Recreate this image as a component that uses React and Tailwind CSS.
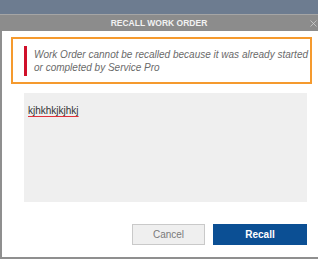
import { X } from "lucide-react";

export default function App() {
  return (
    <div className="w-[318px] h-[261px] bg-white overflow-hidden font-['Liberation_Sans',Arial,sans-serif] flex flex-col">
      {/* Page behind the dialog */}
      <div className="h-[14px] bg-[#6d7c90] shrink-0" />

      {/* Dialog */}
      <div className="flex flex-col h-[245px] border-l-2 border-b-2 border-[#8f8f8f]">
        {/* Header */}
        <div className="h-[17px] bg-[#8c8c8c] border-t border-[#a5a5a5] relative flex items-center justify-center shrink-0 -ml-[2px]">
          <span className="text-[8.5px] font-bold text-[#f2f2f2]">RECALL WORK ORDER</span>
          <X className="absolute right-[-1px] top-[3px] w-[11px] h-[11px] text-[#d8d8d8]" strokeWidth={1.5} />
        </div>

        {/* Alert */}
        <div className="mt-[6px] ml-[9px] mr-[6px] h-[47px] border-2 border-[#f59a2e] flex items-center pl-[11px] shrink-0">
          <div className="w-[3px] h-[30px] bg-[#d0102a] shrink-0" />
          <p className="ml-[7px] text-[10px] leading-[13px] italic text-[#6a6a6a] whitespace-nowrap">
            Work Order cannot be recalled because it was already started
            <br />
            or completed by Service Pro
          </p>
        </div>

        {/* Notes */}
        <div className="mt-[9px] ml-[22px] mr-[11px] h-[109px] bg-[#efefef] px-[4px] pt-[4px] shrink-0">
          <span className="text-[10px] text-[#333] underline decoration-[#e0303a] decoration-1 underline-offset-2">
            kjhkhkjkjhkj
          </span>
        </div>

        {/* Buttons */}
        <div className="mt-[22px] flex justify-end gap-[8px] mr-[11px]">
          <button className="w-[73px] h-[21px] bg-[#efefef] border border-[#c9c9c9] text-[10px] text-[#7a7a7a]">
            Cancel
          </button>
          <button className="w-[94px] h-[21px] bg-[#0b4f94] text-[10px] font-bold text-white">
            Recall
          </button>
        </div>
      </div>
    </div>
  );
}
